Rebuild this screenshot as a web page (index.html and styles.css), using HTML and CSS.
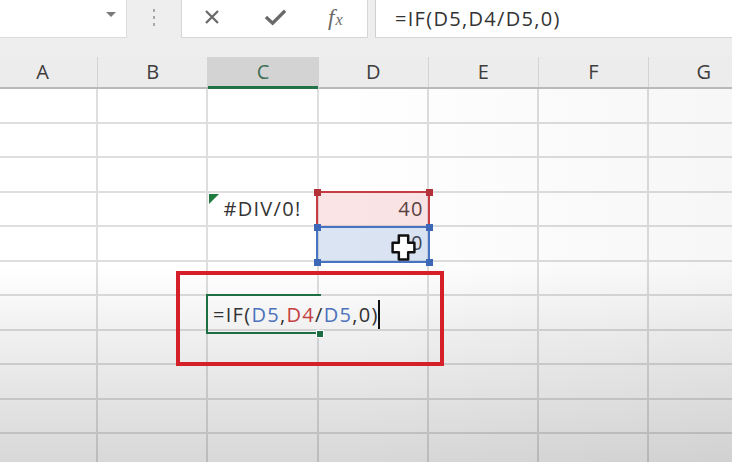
FILE: index.html
```html
<!DOCTYPE html>
<html>
<head>
<meta charset="utf-8">
<link rel="stylesheet" href="styles.css">
</head>
<body>
<div class="topbar">
  <div class="namebox"><span class="dropdown"></span></div>
  <div class="grip"><i></i><i></i><i></i></div>
  <div class="fxbox">
    <svg class="ic-x" viewBox="0 0 16 16"><path d="M2 2 L14 14 M14 2 L2 14"/></svg>
    <svg class="ic-ok" viewBox="0 0 24 18"><path d="M2 9 L9 15.5 L22 2.5"/></svg>
    <span class="fx">f<span class="fx-x">x</span></span>
  </div>
  <div class="formula">=IF(D5,D4/D5,0)</div>
</div>

<div class="headers">
  <div class="hd">A</div>
  <div class="hd">B</div>
  <div class="hd active">C</div>
  <div class="hd">D</div>
  <div class="hd">E</div>
  <div class="hd">F</div>
  <div class="hd">G</div>
</div>

<div class="sheet">
  <div class="c"></div><div class="c"></div><div class="c"></div><div class="c"></div><div class="c"></div><div class="c"></div><div class="c"></div>
  <div class="c"></div><div class="c"></div><div class="c"></div><div class="c"></div><div class="c"></div><div class="c"></div><div class="c"></div>
  <div class="c"></div><div class="c"></div><div class="c"></div><div class="c"></div><div class="c"></div><div class="c"></div><div class="c"></div>
  <div class="c"></div><div class="c"></div><div class="c err">#DIV/0!</div><div class="c num">40</div><div class="c"></div><div class="c"></div><div class="c"></div>
  <div class="c"></div><div class="c"></div><div class="c"></div><div class="c num">0</div><div class="c"></div><div class="c"></div><div class="c"></div>
  <div class="c"></div><div class="c"></div><div class="c"></div><div class="c"></div><div class="c"></div><div class="c"></div><div class="c"></div>
  <div class="c"></div><div class="c"></div><div class="c editing"></div><div class="c"></div><div class="c"></div><div class="c"></div><div class="c"></div>
  <div class="c"></div><div class="c"></div><div class="c"></div><div class="c"></div><div class="c"></div><div class="c"></div><div class="c"></div>
  <div class="c"></div><div class="c"></div><div class="c"></div><div class="c"></div><div class="c"></div><div class="c"></div><div class="c"></div>
  <div class="c"></div><div class="c"></div><div class="c"></div><div class="c"></div><div class="c"></div><div class="c"></div><div class="c"></div>
  <div class="c"></div><div class="c"></div><div class="c"></div><div class="c"></div><div class="c"></div><div class="c"></div><div class="c"></div>

  <div class="ref ref-red"><i class="k tl"></i><i class="k tr"></i><i class="k bl"></i><i class="k br"></i></div>
  <div class="ref ref-blue"><i class="k tl"></i><i class="k tr"></i><i class="k bl"></i><i class="k br"></i></div>

  <svg class="cursor" viewBox="0 0 24 26"><path d="M7.5 1.5 H16.5 V8.5 H22.5 V17.5 H16.5 V24.5 H7.5 V17.5 H1.5 V8.5 H7.5 Z"/></svg>

  <div class="edit">=IF(<span class="rb">D5</span>,<span class="rr">D4</span>/<span class="rb">D5</span>,0)<span class="caret"></span></div>
  <div class="edit-frame"></div>

  <div class="callout"></div>
</div>
</body>
</html>
```

FILE: styles.css
```css
* { box-sizing: border-box; }

html, body {
  margin: 0;
  width: 732px;
  height: 462px;
  overflow: hidden;
}

body {
  background: #eeeeee;
  font-family: "Open Sans", "Noto Sans", sans-serif;
  color: #333;
}

/* ---------- formula bar ---------- */
.topbar {
  display: flex;
  height: 38px;
}

.namebox {
  width: 127px;
  background: #fff;
  border-bottom: 1px solid #dcdcdc;
  border-right: 1px solid #dcdcdc;
  display: flex;
  justify-content: flex-end;
  align-items: flex-start;
  padding: 12px 10px 0 0;
}

.dropdown {
  width: 0;
  height: 0;
  border-left: 5px solid transparent;
  border-right: 5px solid transparent;
  border-top: 5px solid #7a7a7a;
}

.grip {
  width: 54px;
  display: flex;
  flex-direction: column;
  align-items: center;
  gap: 4px;
  padding-top: 9px;
}

.grip i {
  display: block;
  width: 2px;
  height: 3px;
  background: #a9a9a9;
}

.fxbox {
  width: 187px;
  background: #fff;
  border-left: 1px solid #d6d6d6;
  border-right: 1px solid #d6d6d6;
  border-bottom: 1px solid #d6d6d6;
  display: flex;
  align-items: center;
  padding-left: 22px;
  padding-bottom: 3px;
}

.ic-x {
  width: 16px;
  height: 16px;
  fill: none;
  stroke: #6a6a6a;
  stroke-width: 2.3;
}

.ic-ok {
  width: 23px;
  height: 18px;
  margin-left: 44px;
  fill: none;
  stroke: #6a6a6a;
  stroke-width: 3.4;
  stroke-linejoin: miter;
}

.fx {
  margin-left: 41px;
  font-family: "Liberation Serif", "DejaVu Serif", serif;
  font-style: italic;
  font-size: 23px;
  color: #6a6a6a;
  line-height: 1;
}

.fx-x {
  font-size: 16px;
  margin-left: 1px;
}

.formula {
  flex: 1;
  margin-left: 7px;
  background: #fff;
  border-left: 1px solid #cfcfcf;
  border-bottom: 1px solid #d6d6d6;
  padding-left: 19px;
  font-size: 20px;
  letter-spacing: 1.3px;
  line-height: 37px;
  color: #333;
  white-space: nowrap;
}

/* ---------- column headers ---------- */
.headers {
  margin-top: 19px;
  margin-left: -12px;
  display: grid;
  grid-template-columns: repeat(7, 110.2px);
  height: 32px;
  border-bottom: 2px solid #b9b9b9;
  background: #ececec;
  width: 772px;
}

.hd {
  border-right: 1px solid #d3d3d3;
  text-align: center;
  font-size: 20px;
  line-height: 30px;
  color: #3d3d3d;
}

.hd.active {
  background: #d3d3d3;
  color: #3f6f57;
  box-shadow: inset 0 -3px 0 #217346;
  margin-bottom: -2px;
}

/* ---------- sheet grid ---------- */
.sheet {
  position: relative;
  margin-left: -12px;
  width: 772px;
  display: grid;
  grid-template-columns: repeat(7, 110.2px);
  grid-auto-rows: 34.5px;
  background:
    linear-gradient(to right, rgba(0,0,0,0) 45%, rgba(0,0,0,0.035) 100%),
    linear-gradient(to bottom, #ffffff 0px, #ffffff 178px, #f1f1f1 240px, #d8d8d8 373px);
}

.c {
  border-right: 2px solid rgba(0, 0, 0, 0.13);
  border-bottom: 2px solid rgba(0, 0, 0, 0.13);
  font-size: 20px;
  line-height: 32.5px;
  letter-spacing: 1.3px;
  color: #333;
  white-space: nowrap;
  position: relative;
}

.c.editing {
  border-right-color: transparent;
}

.c.err {
  text-align: center;
}

.c.err::before {
  content: "";
  position: absolute;
  left: 1px;
  top: 1px;
  border-top: 10px solid #1f7b3d;
  border-right: 10px solid transparent;
}

.c.num {
  text-align: right;
  padding-right: 3px;
}

/* referenced ranges (overlay) */
.ref {
  position: absolute;
  left: 328px;
  width: 114px;
  height: 37px;
  border: 2px solid;
}

.ref-red {
  top: 102px;
  border-color: #c53d42;
  background: rgba(235, 120, 125, 0.2);
}

.ref-blue {
  top: 137px;
  border-color: #4673c2;
  background: rgba(90, 130, 200, 0.22);
}

.k {
  position: absolute;
  width: 7px;
  height: 7px;
}

.ref-red .k { background: #b5313a; }
.ref-blue .k { background: #3d68b8; }

.k.tl { left: -4.5px; top: -4.5px; }
.k.tr { right: -4.5px; top: -4.5px; }
.k.bl { left: -4.5px; bottom: -4.5px; }
.k.br { right: -4.5px; bottom: -4.5px; }

.ref-red .k.bl, .ref-red .k.br { display: none; }

/* mouse cursor */
.cursor {
  position: absolute;
  left: 403px;
  top: 145px;
  width: 25px;
  height: 27px;
  fill: #fff;
  stroke: #111;
  stroke-width: 2.4;
  stroke-linejoin: round;
}

/* in-cell editor */
.edit {
  position: absolute;
  left: 220px;
  top: 207px;
  width: 220px;
  height: 34px;
  padding: 4px 0 0 5px;
  font-size: 20px;
  line-height: 30px;
  letter-spacing: 1.3px;
  color: #333;
  white-space: nowrap;
}

.rb { color: #4c72bd; }
.rr { color: #c4403f; }

.caret {
  display: inline-block;
  width: 2px;
  height: 29px;
  margin-left: -1px;
  background: #111;
  vertical-align: -7px;
}

.edit-frame {
  position: absolute;
  left: 218px;
  top: 205px;
  width: 115px;
  height: 40px;
  border-top: 2.5px solid #1f6e43;
  border-left: 2.5px solid #1f6e43;
}

.edit-frame::before {
  content: "";
  position: absolute;
  left: -2.5px;
  bottom: 0;
  width: 111px;
  height: 2.5px;
  background: #1f6e43;
}

.edit-frame::after {
  content: "";
  position: absolute;
  right: -2px;
  bottom: -3px;
  width: 6px;
  height: 6px;
  background: #1f6e43;
  box-shadow: 0 0 0 1px #fff;
}

/* red annotation box */
.callout {
  position: absolute;
  left: 188px;
  top: 182px;
  width: 268px;
  height: 95px;
  border: 4px solid #d5202a;
}
```
